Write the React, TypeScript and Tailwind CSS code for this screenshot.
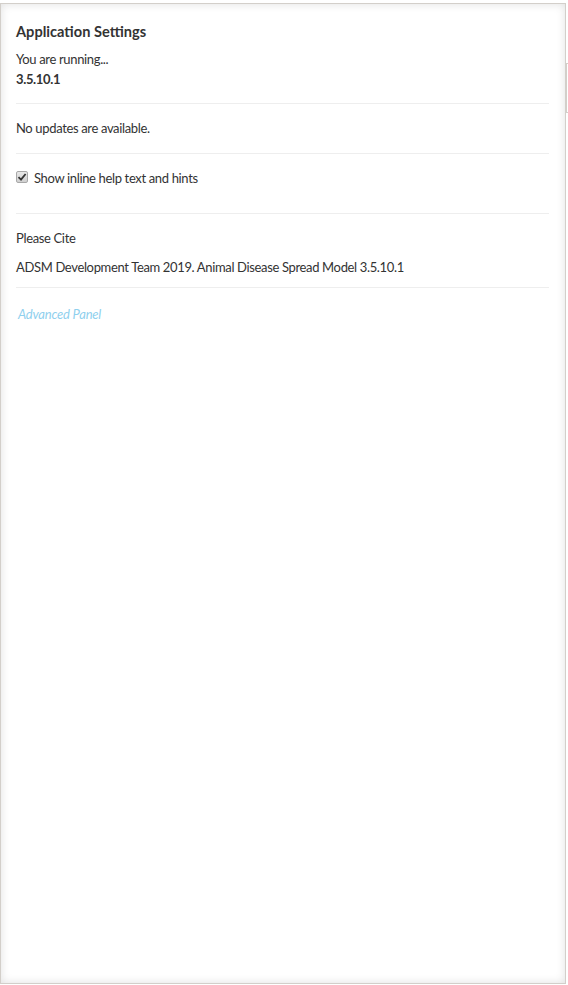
import React from "react";

export default function App() {
  const font = { fontFamily: "Lato, 'Open Sans', sans-serif" };
  return (
    <div className="w-[568px] h-[985px] bg-white flex items-start" style={font}>
      <div className="mt-[3px] w-[566px] h-[981px] border border-[#d3cfca] shadow-[inset_0_0_10px_rgba(0,0,0,0.12)] bg-white pl-[15px] pr-[16px] pt-[18px] text-[#333] text-[13px] tracking-[-0.35px] leading-[20px]">
        <div className="text-[14.6px] font-bold leading-[20px] tracking-normal">Application Settings</div>
        <div className="mt-[7px]">You are running...</div>
        <div className="font-bold">3.5.10.1</div>
        <div className="mt-[14px] h-px bg-[#eee]" />
        <div className="mt-[14px]">No updates are available.</div>
        <div className="mt-[15px] h-px bg-[#eee]" />
        <div className="mt-[14px] flex items-center">
          <span className="w-[12px] h-[12px] rounded-[2px] border border-[#a8a8a8] bg-gradient-to-b from-[#e8e8e8] to-[#d0d0d0] flex items-center justify-center mr-[6px] -mt-[2px]">
            <svg width="10" height="10" viewBox="0 0 10 10">
              <path d="M1.5 5.2 L4 7.6 L8.6 2" fill="none" stroke="#333" strokeWidth="1.8" />
            </svg>
          </span>
          <span>Show inline help text and hints</span>
        </div>
        <div className="mt-[25px] h-px bg-[#eee]" />
        <div className="mt-[14px]">Please Cite</div>
        <div className="mt-[9px]">ADSM Development Team 2019. Animal Disease Spread Model 3.5.10.1</div>
        <div className="mt-[10px] h-px bg-[#eee]" />
        <div className="mt-[16px] pl-[2px] italic text-[#8fd0ee] text-[13px] tracking-[-0.2px]">Advanced Panel</div>
      </div>
      <div className="mt-[63px] w-[2px] h-[50px] border-t border-b border-l border-[#d3cfca] bg-white" />
    </div>
  );
}
